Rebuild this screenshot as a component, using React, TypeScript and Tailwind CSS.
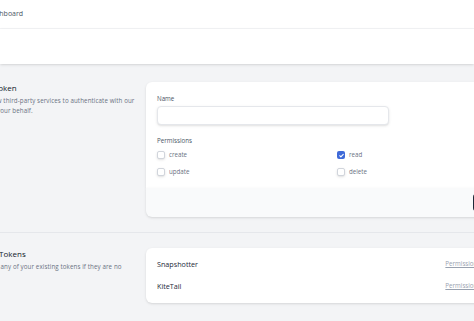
import React from "react";

const font = { fontFamily: "'Open Sans', Lato, sans-serif" };

const Checkbox = ({ label, checked }: { label: string; checked?: boolean }) => (
  <label className="flex items-center h-[10px]">
    {checked ? (
      <span className="w-[8px] h-[8px] rounded-[2px] bg-[#3f6ad8] flex items-center justify-center">
        <svg viewBox="0 0 16 16" className="w-[7px] h-[7px]" fill="none" stroke="white" strokeWidth="2.5">
          <path d="M4 8.5l2.5 2.5L12 5.5" strokeLinecap="round" strokeLinejoin="round" />
        </svg>
      </span>
    ) : (
      <span className="w-[8px] h-[8px] rounded-[2px] border border-gray-300 bg-white shadow-sm" />
    )}
    <span className="ml-[4px] text-[6.2px] leading-[10px] text-gray-500">{label}</span>
  </label>
);

const SectionTitle = ({ title, text, textWidth }: { title: string; text: string; textWidth: string }) => (
  <div className="w-[184px] shrink-0">
    <h3 className="text-[8px] leading-[12px] text-gray-900">{title}</h3>
    <p className={`mt-[2px] text-[6.2px] leading-[10px] tracking-[0.1px] text-gray-500 ${textWidth}`}>{text}</p>
  </div>
);

export default function App() {
  const tokens = ["Snapshotter", "KiteTail"];
  return (
    <div className="w-[474px] h-[321px] overflow-hidden bg-gray-100" style={font}>
      <nav className="h-[29px] bg-white border-b border-gray-100 flex items-center">
        <span className="-ml-[13px] text-[7px] text-gray-600">Dashboard</span>
      </nav>
      <header className="h-[35px] bg-white shadow-sm" />

      <main className="pt-[18px] -ml-[47px]">
        <div className="flex gap-[9px]">
          <SectionTitle
            title="Create API Token"
            text="API tokens allow third-party services to authenticate with our application on your behalf."
            textWidth="max-w-[184px]"
          />
          <div className="w-[375px] shrink-0">
            <div className="bg-white rounded-t-md shadow-sm px-[11px] pt-[12px] pb-[11px]">
              <div className="text-[6.2px] leading-[10px] text-gray-600">Name</div>
              <div className="mt-[2px] w-[232px] h-[19px] border border-gray-200 rounded-[4px] shadow-sm bg-white" />
              <div className="mt-[11px] text-[6.2px] leading-[10px] text-gray-600">Permissions</div>
              <div className="mt-[4px] grid grid-cols-2 gap-x-[7px] gap-y-[7px]">
                <Checkbox label="create" />
                <Checkbox label="read" checked />
                <Checkbox label="update" />
                <Checkbox label="delete" />
              </div>
            </div>
            <div className="h-[29px] bg-gray-50 rounded-b-md shadow flex items-center justify-end px-[11px]">
              <button className="h-[17px] px-[7px] bg-gray-800 rounded-[3px] text-white text-[5.5px] font-semibold uppercase tracking-widest">
                Create
              </button>
            </div>
          </div>
        </div>

        <div className="py-[15px]">
          <div className="border-t border-gray-200 w-[600px]" />
        </div>

        <div className="flex gap-[9px]">
          <SectionTitle
            title="Manage API Tokens"
            text="You may delete any of your existing tokens if they are no longer needed."
            textWidth="max-w-[172px]"
          />
          <div className="w-[375px] shrink-0 bg-white rounded-md shadow px-[11px] pt-[11px] pb-[12px] flex flex-col gap-[12px]">
            {tokens.map((t) => (
              <div key={t} className="flex items-center justify-between h-[10px]">
                <div className="text-[7.2px] text-gray-800">{t}</div>
                <div className="flex items-center">
                  <button className="text-[6.2px] text-gray-400 underline">Permissions</button>
                  <button className="ml-[11px] text-[6.2px] text-red-500">Delete</button>
                </div>
              </div>
            ))}
          </div>
        </div>
      </main>
    </div>
  );
}
